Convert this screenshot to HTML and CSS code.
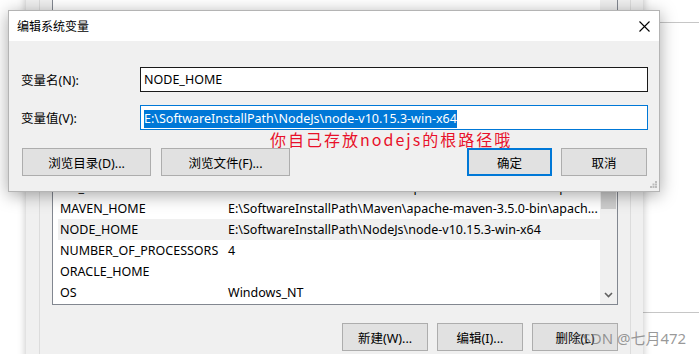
FILE: index.html
```html
<!DOCTYPE html>
<html lang="zh-CN">
<head>
  <meta charset="UTF-8" />
  <meta name="viewport" content="width=device-width, initial-scale=1.0" />
  <title>编辑系统变量</title>
  <link rel="stylesheet" href="styles.css">
</head>
<body>
  <div class="desk">
    <div class="backline line-top"></div>
    <div class="backline line-bottom"></div>

    <div class="envwin">
      <div class="group">
        <div class="varlist">
          <div class="rows">
            <div class="row"><span class="name">ComSpec</span><span class="val">C:\WINDOWS\system32\cmd.exe</span></div>
            <div class="row"><span class="name">DriverData</span><span class="val">C:\Windows\System32\Drivers\DriverData</span></div>
            <div class="row"><span class="name">ERLANG_HOME</span><span class="val">E:\SoftwareInstallPath\erl9.3</span></div>
            <div class="row"><span class="name">GRADLE_HOME</span><span class="val">E:\SoftwareInstallPath\Gradle\gradle-4.10</span></div>
            <div class="row"><span class="name">GRADLE_USER_HOME</span><span class="val">E:\SoftwareInstallPath\Gradle\repository</span></div>
            <div class="row"><span class="name">JAVA_HOME</span><span class="val">E:\SoftwareInstallPath\Java\jdk1.8.0_131</span></div>
            <div class="row"><span class="name">JRE_HOME</span><span class="val">E:\SoftwareInstallPath\Java\jre1.8.0_131</span></div>
            <div class="row"><span class="name">KAFKA_HOME</span><span class="val">E:\SoftwareInstallPath\kafka_2.12</span></div>
            <div class="row"><span class="name">M2_HOME</span><span class="val">E:\SoftwareInstallPath\Maven\apache-maven-3.5.0-bin\apach...</span></div>
            <div class="row"><span class="name">MAVEN_HOME</span><span class="val">E:\SoftwareInstallPath\Maven\apache-maven-3.5.0-bin\apach...</span></div>
            <div class="row current"><span class="name">NODE_HOME</span><span class="val">E:\SoftwareInstallPath\NodeJs\node-v10.15.3-win-x64</span></div>
            <div class="row"><span class="name">NUMBER_OF_PROCESSORS</span><span class="val">4</span></div>
            <div class="row"><span class="name">ORACLE_HOME</span><span class="val"></span></div>
            <div class="row"><span class="name">OS</span><span class="val">Windows_NT</span></div>
          </div>
          <div class="vscroll">
            <div class="thumb"></div>
            <svg class="arrow" width="9" height="6" viewBox="0 0 9 6">
              <path d="M1 1 L4.5 4.5 L8 1" fill="none" stroke="#606060" stroke-width="1.6"/>
            </svg>
          </div>
        </div>
        <div class="actions">
          <button class="btn wide">新建(W)...</button>
          <button class="btn wide">编辑(I)...</button>
          <button class="btn wide">删除(L)</button>
        </div>
      </div>
    </div>

    <div class="dialog">
      <div class="titlebar">
        <span class="title">编辑系统变量</span>
        <svg class="close" width="11" height="11" viewBox="0 0 11 11">
          <path d="M0.5 0.5 L10.5 10.5 M10.5 0.5 L0.5 10.5" stroke="#000" stroke-width="1.1"/>
        </svg>
      </div>
      <div class="dlgbody">
        <div class="field">
          <label class="label">变量名(N):</label>
          <div class="input">NODE_HOME</div>
        </div>
        <div class="field">
          <label class="label">变量值(V):</label>
          <div class="input focused"><span class="sel">E:\SoftwareInstallPath\NodeJs\node-v10.15.3-win-x64</span></div>
        </div>
        <div class="dlgbtns">
          <button class="btn browse">浏览目录(D)...</button>
          <button class="btn browse">浏览文件(F)...</button>
          <span class="spacer"></span>
          <button class="btn primary">确定</button>
          <button class="btn wide">取消</button>
        </div>
      </div>
      <svg class="grip" width="7" height="7" viewBox="0 0 7 7">
        <rect x="5" y="0" width="2" height="2" fill="#bcbcbc"/>
        <rect x="2.5" y="2.5" width="2" height="2" fill="#bcbcbc"/>
        <rect x="5" y="2.5" width="2" height="2" fill="#bcbcbc"/>
        <rect x="0" y="5" width="2" height="2" fill="#bcbcbc"/>
        <rect x="2.5" y="5" width="2" height="2" fill="#bcbcbc"/>
        <rect x="5" y="5" width="2" height="2" fill="#bcbcbc"/>
      </svg>
    </div>

    <div class="note">你自己存放nodejs的根路径哦</div>
    <div class="watermark">CSDN @七月472</div>
  </div>
</body>
</html>
```

FILE: styles.css
```css
* { box-sizing: border-box; }
html, body {
  margin: 0;
  padding: 0;
  background: #fff;
}
body {
  font-family: "Noto Sans", "Noto Sans CJK SC", sans-serif;
  font-size: 12.5px;
  color: #000;
}
.desk {
  position: relative;
  width: 699px;
  height: 354px;
  overflow: hidden;
  background: #fff;
}

/* bits of the window further back */
.backline {
  position: absolute;
  right: 0;
  height: 1px;
  background: #c6c6c6;
}
.line-top { top: 22px; left: 600px; }
.line-bottom { top: 312px; left: 643px; }

/* environment variables window behind */
.envwin {
  position: absolute;
  left: 26px;
  top: -13px;
  width: 617px;
  height: 400px;
  background: #f0f0f0;
  padding: 0 12px 0 13px;
  box-shadow: 0 0 8px rgba(0,0,0,0.25);
}
.group {
  height: 100%;
  border-left: 1px solid #dcdcdc;
  border-right: 1px solid #dcdcdc;
  padding: 0 12px;
}
.varlist {
  display: flex;
  height: 318px;
  border: 1px solid #828790;
  background: #fff;
  overflow: hidden;
}
.rows {
  width: 547px;
  padding: 21px 0 0 5px;
}
.row {
  display: flex;
  height: 21px;
  line-height: 21px;
  padding-left: 2px;
  white-space: nowrap;
  overflow: hidden;
}
.row.current { background: #f0f0f0; }
.row .name { width: 168px; flex-shrink: 0; }
.vscroll {
  width: 17px;
  background: #f0f0f0;
  display: flex;
  flex-direction: column;
  align-items: center;
  padding-top: 131px;
}
.thumb {
  width: 15px;
  height: 90px;
  background: #cdcdcd;
}
.arrow { margin-top: auto; margin-bottom: 6px; }

.actions {
  display: flex;
  justify-content: flex-end;
  gap: 9px;
  margin-top: 18px;
}

.btn {
  height: 28px;
  background: #e1e1e1;
  border: 1px solid #adadad;
  font-family: inherit;
  font-size: 12.5px;
  color: #000;
  padding: 0;
  margin: 0;
}
.btn.wide { width: 86px; }
.btn.browse { width: 129px; }
.btn.primary { width: 85px; border: 2px solid #0078d7; margin-right: -1px; }

/* edit dialog in front */
.dialog {
  position: absolute;
  left: 8px;
  top: 10px;
  width: 652px;
  height: 182px;
  background: #f0f0f0;
  border: 1px solid #b4b4b4;
  box-shadow: 0 3px 16px rgba(0,0,0,0.35);
}
.titlebar {
  display: flex;
  align-items: center;
  justify-content: space-between;
  height: 30px;
  background: #fff;
  padding: 0 9px 0 8px;
}
.title { font-size: 12px; }
.close { margin-top: 1px; }
.dlgbody {
  display: flex;
  flex-direction: column;
  gap: 13px;
  padding: 26px 12px 0 12px;
}
.field {
  display: flex;
  align-items: center;
}
.label { width: 119px; flex-shrink: 0; }
.input {
  flex: 1;
  height: 25px;
  line-height: 23px;
  border: 1px solid #1a1a1a;
  background: #fff;
  padding-left: 3px;
  margin-right: -1px;
  white-space: nowrap;
  overflow: hidden;
}
.input.focused { border-color: #0078d7; }
.sel {
  display: inline-block;
  background: #0078d7;
  color: #fff;
  line-height: 18px;
  vertical-align: middle;
}
.dlgbtns {
  display: flex;
  gap: 10px;
  margin-top: 5px;
  padding-left: 1px;
}
.spacer { flex: 1; }
.grip {
  position: absolute;
  right: 2px;
  bottom: 3px;
}

/* overlays */
.note {
  position: absolute;
  left: 270px;
  top: 131px;
  font-family: "Noto Sans CJK SC", sans-serif;
  font-size: 16px;
  line-height: 16px;
  letter-spacing: 2px;
  color: #e8102a;
  white-space: nowrap;
}
.watermark {
  position: absolute;
  left: 573px;
  top: 329px;
  font-family: "Noto Sans", "Noto Sans CJK SC", sans-serif;
  font-size: 15px;
  line-height: 18px;
  color: rgba(120,120,120,0.75);
  white-space: nowrap;
}
```
